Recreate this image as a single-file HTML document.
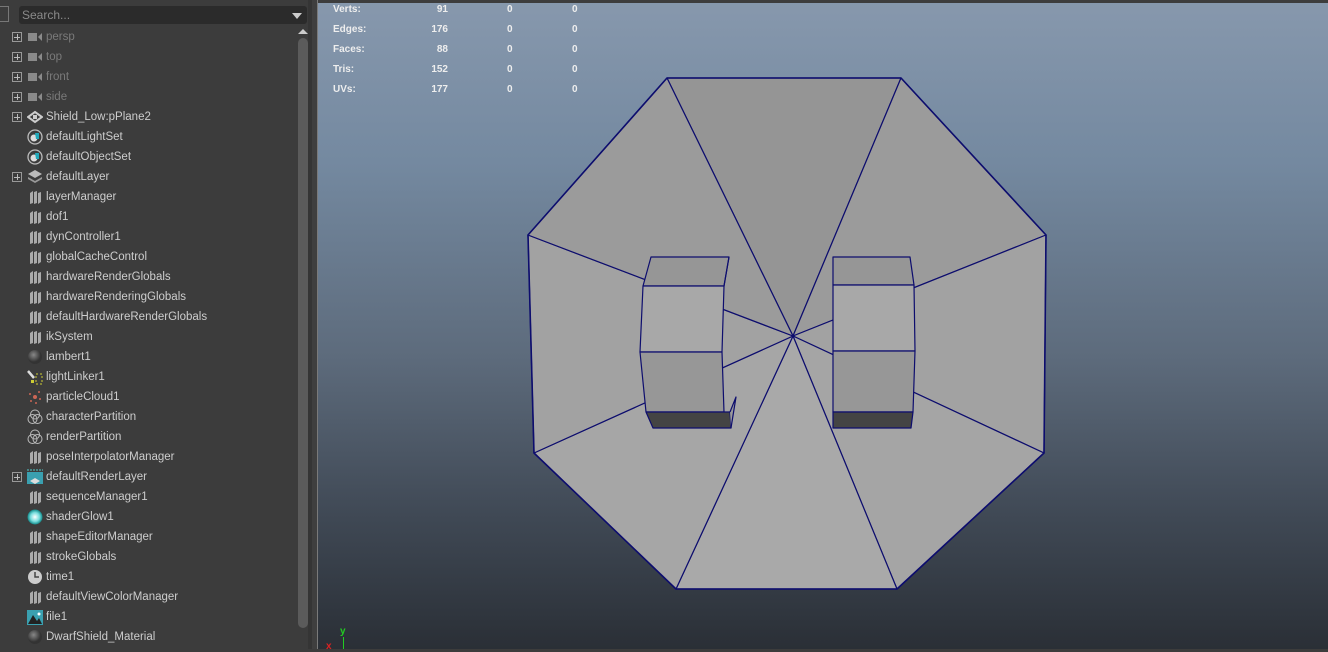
<!DOCTYPE html>
<html><head><meta charset="utf-8"><style>
*{margin:0;padding:0;box-sizing:border-box}
body{width:1328px;height:649px;overflow:hidden;background:#3c3c3c;font-family:"Liberation Sans",sans-serif;position:relative}
#left{position:absolute;left:0;top:0;width:308px;height:649px;background:#3c3c3c}
#div{position:absolute;left:308px;top:0;width:9px;height:649px;background:#3f3f3f;border-left:4px solid #353535}
#vline{position:absolute;left:317px;top:0;width:1px;height:649px;background:#7a7a7a}
#search{position:absolute;left:19px;top:6px;width:288px;height:18px;background:#2b2b2b;border-radius:3px;color:#8a8a8a;font-size:12px;line-height:18px;padding-left:3px}
#search .arr{position:absolute;right:5px;top:7px;border-left:5px solid transparent;border-right:5px solid transparent;border-top:6px solid #ccc}
#tl{position:absolute;left:0;top:6px;width:9px;height:16px;border:1px solid #777;border-left:none}
#sb{position:absolute;left:298px;top:38px;width:10px;height:590px;background:#5b5b5b;border-radius:5px}
#sbtop{position:absolute;left:298px;top:29px;border-left:5px solid transparent;border-right:5px solid transparent;border-bottom:5px solid #ccc}
.row{position:absolute;left:0;height:20px;width:295px;font-size:11.5px;color:#cdcdcd;line-height:20px}
.row .t{position:absolute;left:46px;top:1px}
.row .ex{position:absolute;left:12px;top:6px;width:10px;height:10px;border:1px solid #999;}
.row .ex:before{content:"";position:absolute;left:1px;top:3.5px;width:6px;height:1px;background:#bbb}
.row .ex:after{content:"";position:absolute;left:3.5px;top:1px;width:1px;height:6px;background:#bbb}
.row .ic{position:absolute;left:27px;top:3px;width:16px;height:16px}
.cam .t{color:#7a7a7a}
#vp{position:absolute;left:318px;top:0;width:1010px;height:649px;background:linear-gradient(#8798ad 0%,#7489a0 25%,#5d6b7c 55%,#3f4854 80%,#2a2f36 100%)}
#tb{position:absolute;left:318px;top:0;width:1010px;height:3px;background:#3d3d3d}
.hud{position:absolute;font-size:10px;font-weight:bold;color:#eee;line-height:20px}
</style></head><body>
<div id="left">
<div id="tl"></div>
<div id="search">Search...<span class="arr"></span></div>
<div id="sbtop"></div><div id="sb"></div>
</div>
<div id="div"></div><div id="vline"></div>
<div id="rows"></div>
<div id="vp">
<svg width="1010" height="649" style="position:absolute;left:0;top:0">
<g transform="translate(-318,0)" stroke="#0d0d6e" stroke-width="1.2" stroke-linejoin="round">
<polygon points="667,78 901,78 793,336" fill="#959595"/>
<polygon points="901,78 1046,235 793,336" fill="#9b9b9b"/>
<polygon points="1046,235 1044,453 793,336" fill="#a2a2a2"/>
<polygon points="1044,453 897,589 793,336" fill="#a5a5a5"/>
<polygon points="897,589 676,589 793,336" fill="#a9a9a9"/>
<polygon points="676,589 534,453 793,336" fill="#a6a6a6"/>
<polygon points="534,453 528,235 793,336" fill="#a2a2a2"/>
<polygon points="528,235 667,78 793,336" fill="#9b9b9b"/>
<polygon points="667,78 901,78 1046,235 1044,453 897,589 676,589 534,453 528,235" fill="none" stroke-width="1.6"/>
<polygon points="651,257 729,257 724,286 643,286" fill="#969696"/>
<polygon points="643,286 724,286 722,352 640,352" fill="#a8a8a8"/>
<polygon points="640,352 722,352 724,412 646,412" fill="#979797"/>
<polygon points="646,412 730,412 731,428 653,428" fill="#444"/>
<polyline points="724,286 729,257" fill="none"/>
<polyline points="730,412 736,397 731,428" fill="#9a9a9a"/>
<polygon points="833,257 910,257 914,285 833,285" fill="#969696"/>
<polygon points="833,285 914,285 915,351 833,351" fill="#a8a8a8"/>
<polygon points="833,351 915,351 913,412 833,412" fill="#979797"/>
<polygon points="833,412 913,412 911,428 833,428" fill="#444"/>
</g>
</svg>
<div class="hud" style="left:15px;top:0">Verts:<br>Edges:<br>Faces:<br>Tris:<br>UVs:</div>
<div class="hud" style="left:80px;width:50px;text-align:right;top:0">91<br>176<br>88<br>152<br>177</div>
<div class="hud" style="left:189px;top:0">0<br>0<br>0<br>0<br>0</div>
<div class="hud" style="left:254px;top:0">0<br>0<br>0<br>0<br>0</div>
<div style="position:absolute;left:22px;top:626px;color:#2c2;font-size:10px;font-weight:bold">y</div>
<div style="position:absolute;left:25px;top:637px;width:1px;height:12px;background:#2c2"></div>
<div style="position:absolute;left:8px;top:641px;color:#d22;font-size:10px;font-weight:bold">x</div>
</div>
<div id="tb"></div>
<script>
var items=[["persp",1,"cam"],["top",1,"cam"],["front",1,"cam"],["side",1,"cam"],["Shield_Low:pPlane2",1,"mesh"],["defaultLightSet",0,"set"],["defaultObjectSet",0,"set"],["defaultLayer",1,"layer"],["layerManager",0,"n"],["dof1",0,"n"],["dynController1",0,"n"],["globalCacheControl",0,"n"],["hardwareRenderGlobals",0,"n"],["hardwareRenderingGlobals",0,"n"],["defaultHardwareRenderGlobals",0,"n"],["ikSystem",0,"n"],["lambert1",0,"ball"],["lightLinker1",0,"ll"],["particleCloud1",0,"pc"],["characterPartition",0,"part"],["renderPartition",0,"part"],["poseInterpolatorManager",0,"n"],["defaultRenderLayer",1,"rl"],["sequenceManager1",0,"n"],["shaderGlow1",0,"glow"],["shapeEditorManager",0,"n"],["strokeGlobals",0,"n"],["time1",0,"time"],["defaultViewColorManager",0,"n"],["file1",0,"file"],["DwarfShield_Material",0,"ball"]];
var ic={
cam:'<svg class="ic" viewBox="0 0 16 16"><rect x="1" y="4" width="9" height="8" fill="#8a8a8a"/><polygon points="11,8 15,4 15,12" fill="#8a8a8a"/></svg>',
mesh:'<svg class="ic" viewBox="0 0 16 16"><polygon points="8,3 15,8 8,13 1,8" fill="none" stroke="#ccc" stroke-width="2"/><rect x="6" y="6" width="4" height="4" fill="#ccc"/></svg>',
set:'<svg class="ic" viewBox="0 0 16 16"><circle cx="8" cy="8" r="7" fill="none" stroke="#bbb" stroke-width="1.3"/><circle cx="7" cy="9" r="3.5" fill="#ddd"/><path d="M8 4h4v6h-3z" fill="#2ab"/></svg>',
layer:'<svg class="ic" viewBox="0 0 16 16"><polygon points="8,1 15,5 8,9 1,5" fill="#bbb"/><polygon points="1,8 8,12 15,8 15,10 8,14 1,10" fill="#999"/></svg>',
n:'<svg class="ic" viewBox="0 0 16 16"><path d="M3 4l3-2v12l-3 1z M7 3l3-1v12l-3 1z M11 4l3-1v10l-3 2z" fill="#aaa"/></svg>',
ball:'<svg class="ic" viewBox="0 0 16 16"><defs><radialGradient id="g" cx=".4" cy=".35"><stop offset="0" stop-color="#888"/><stop offset="1" stop-color="#333"/></radialGradient></defs><circle cx="8" cy="8" r="7" fill="url(#g)"/></svg>',
ll:'<svg class="ic" viewBox="0 0 16 16"><path d="M1 2l6 7" stroke="#ddd" stroke-width="2.5"/><rect x="9" y="5" width="6" height="10" fill="none" stroke="#cc3" stroke-dasharray="2 2"/><rect x="4" y="11" width="3" height="3" fill="#cc3"/></svg>',
pc:'<svg class="ic" viewBox="0 0 16 16"><g fill="#c65"><circle cx="8" cy="8" r="2"/><circle cx="3" cy="5" r="1"/><circle cx="12" cy="3" r="1"/><circle cx="13" cy="10" r="1"/><circle cx="4" cy="12" r="1"/><circle cx="9" cy="14" r="1"/></g></svg>',
part:'<svg class="ic" viewBox="0 0 16 16" fill="none" stroke="#bbb"><circle cx="8" cy="5.5" r="4.5"/><circle cx="5.5" cy="10" r="4.5"/><circle cx="10.5" cy="10" r="4.5"/></svg>',
rl:'<svg class="ic" viewBox="0 0 16 16"><rect x="0" y="3" width="16" height="12" fill="#3aa0b0"/><path d="M0 1h16" stroke="#5cc" stroke-dasharray="2 1"/><polygon points="3,12 8,9 13,12 8,15" fill="#ddd"/></svg>',
glow:'<svg class="ic" viewBox="0 0 16 16"><defs><radialGradient id="h"><stop offset="0" stop-color="#fff"/><stop offset=".6" stop-color="#7dd"/><stop offset="1" stop-color="#188"/></radialGradient></defs><circle cx="8" cy="8" r="7.5" fill="url(#h)"/></svg>',
time:'<svg class="ic" viewBox="0 0 16 16"><circle cx="8" cy="8" r="7" fill="#ccc"/><path d="M8 3v5h4" stroke="#444" stroke-width="1.5" fill="none"/></svg>',
file:'<svg class="ic" viewBox="0 0 16 16"><rect x="0" y="1" width="16" height="15" fill="#3aa0b0"/><polygon points="1,15 6,6 10,12 12,9 15,15" fill="#222"/><circle cx="12" cy="5" r="1.5" fill="#fff"/></svg>'
};
var h="";items.forEach(function(it,i){h+='<div class="row '+(it[2]=="cam"?"cam":"")+'" style="top:'+(26+i*20)+'px">'+(it[1]?'<span class="ex"></span>':'')+ic[it[2]]+'<span class="t">'+it[0]+'</span></div>';});
document.getElementById("rows").innerHTML=h;
</script>
</body></html>
